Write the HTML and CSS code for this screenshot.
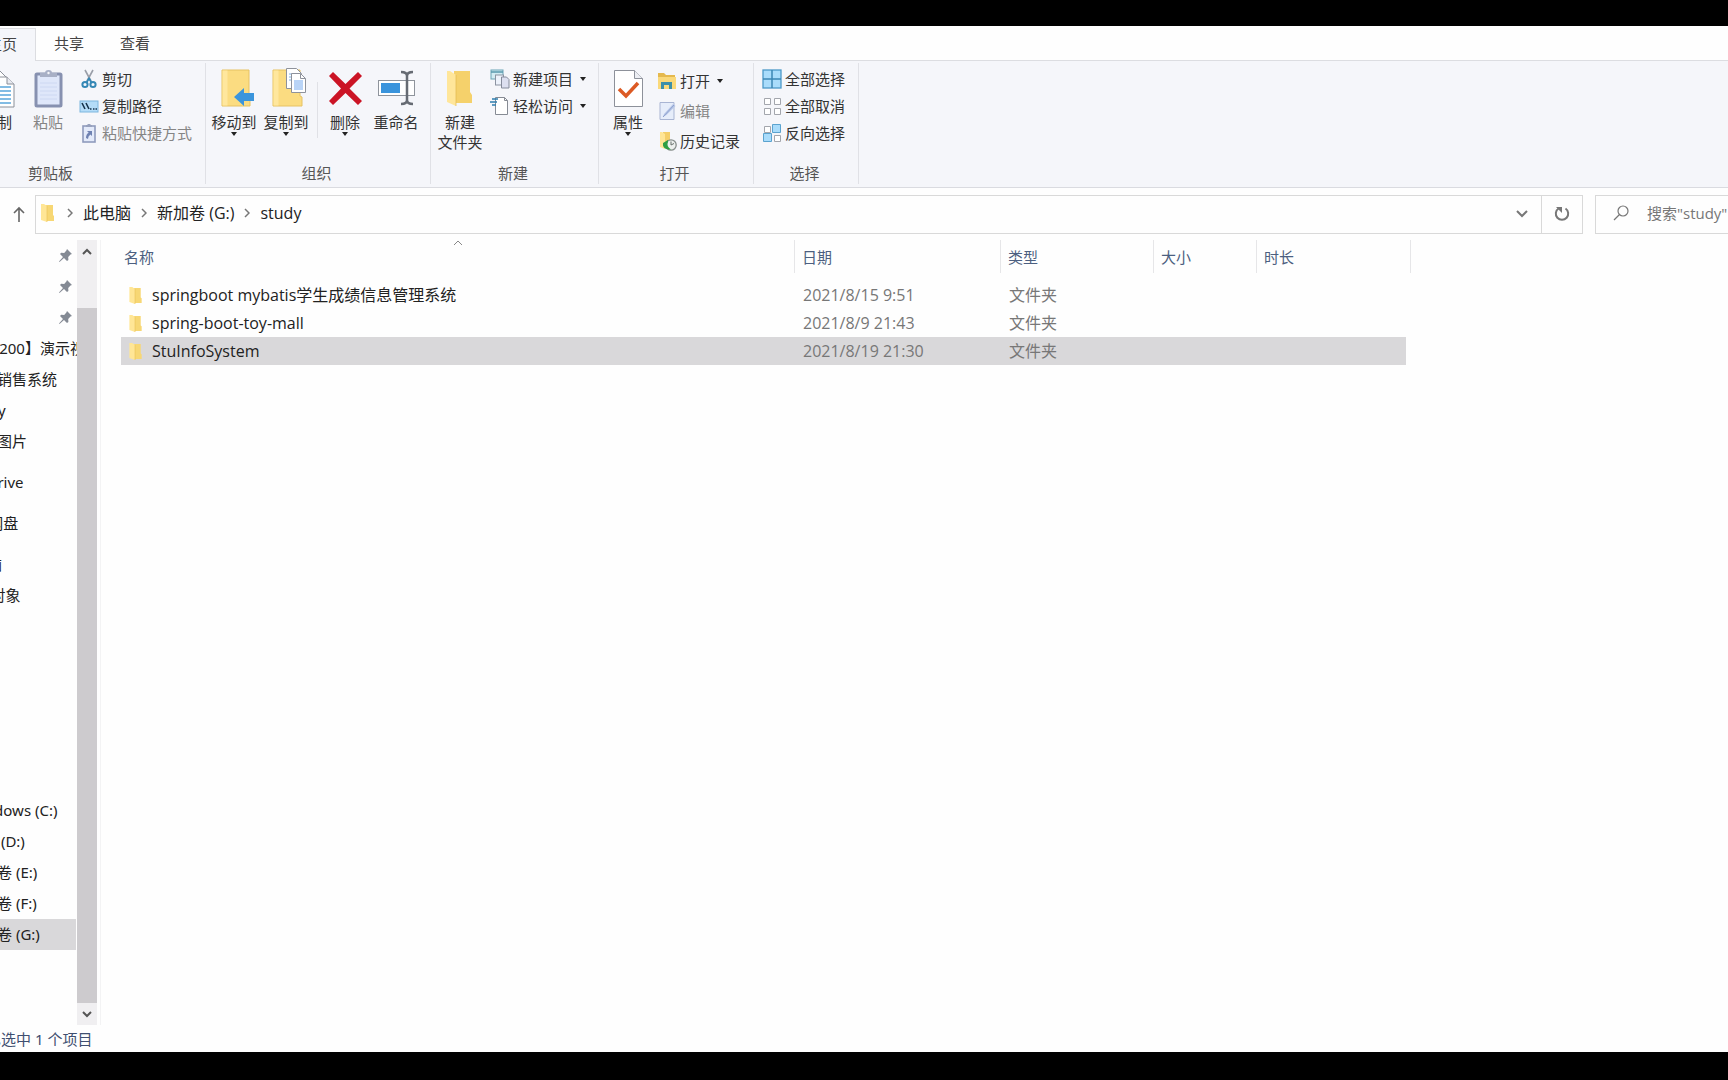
FILE: index.html
```html
<!DOCTYPE html>
<html lang="zh-CN">
<head>
<meta charset="utf-8">
<title>study</title>
<link rel="stylesheet" href="styles.css">
</head>
<body>
<svg class="defs" aria-hidden="true">
  <defs>
    <symbol id="folder" viewBox="0 0 14 18">
      <path d="M3 1h9v10l1 1v5H3z" fill="#f7d774"/>
      <path d="M0 0h3l3 2v16l-6-2z" fill="#ffe696"/>
      <path d="M6 2v16" stroke="#e9bf55" stroke-width=".6"/>
    </symbol>
    <symbol id="pin" viewBox="0 0 13 13">
      <path d="M8 0l5 5-1.5.6-2.3 2.3.2 3L8 12 5 9l-4.500 4L0 12.500 4 8 1 5l1.200-1.300 3 .2L7.400 1.600z" fill="#848a94"/>
    </symbol>
    <symbol id="chevron" viewBox="0 0 6 10">
      <path d="M1 1l4 4-4 4" fill="none" stroke="#777" stroke-width="1.500"/>
    </symbol>
    <symbol id="caret" viewBox="0 0 6 4"><path d="M0 0h6L3 4z" fill="#222"/></symbol>
  </defs>
</svg>
<main class="window">
  <nav class="tabs">
    <button class="tab tab-active">主页</button>
    <button class="tab">共享</button>
    <button class="tab">查看</button>
  </nav>

  <div class="ribbon">
    <section class="group group-clipboard">
      <div class="tools">
        <button class="big">
          <svg class="big-icon" viewBox="0 0 40 40">
            <path d="M10 2h12l7 7v20H10z" fill="#fff" stroke="#8b8f98"/>
            <path d="M17 9h13l7 7v23H17z" fill="#fff" stroke="#8b8f98"/>
            <path d="M30 9v7h7" fill="#e8eaf0" stroke="#8b8f98"/>
            <path d="M20 19h14M20 23h14M20 27h14M20 31h14M20 35h14" stroke="#5aa7dc" stroke-width="1.300"/>
          </svg>
          <span>复制</span>
        </button>
        <button class="big dim">
          <svg class="big-icon" viewBox="0 0 40 40">
            <rect x="8" y="6" width="25" height="32" rx="1" fill="#dfe7fa" stroke="#8791b0" stroke-width="3"/>
            <path d="M12 15h17M12 19h17M12 23h17M12 27h17M12 31h17" stroke="#cdd8f2"/>
            <path d="M12 9V5h5q0-3 3.500-3T24 5h5v4z" fill="#a8b0c6"/>
            <circle cx="20.500" cy="5" r="1.200" fill="#f5f6fa"/>
          </svg>
          <span>粘贴</span>
        </button>
        <div class="stack">
          <button class="small">
            <svg class="icon" viewBox="0 0 20 20">
              <path d="M6 1l6 11M14 1L8 12" stroke="#9a9ea8" stroke-width="1.600" fill="none"/>
              <circle cx="6" cy="15.500" r="2.600" fill="none" stroke="#3487b5" stroke-width="2"/>
              <circle cx="14" cy="15.500" r="2.600" fill="none" stroke="#3487b5" stroke-width="2"/>
              <path d="M7.500 13.500l2.500-4 2.500 4" fill="none" stroke="#3487b5" stroke-width="1.800"/>
            </svg>
            剪切
          </button>
          <button class="small">
            <svg class="icon" viewBox="0 0 20 20">
              <rect x="1" y="5" width="18" height="11" fill="#b4dcf8" stroke="#7db6de"/>
              <path d="M3 7l3 6M7 7l3 6" stroke="#16344d" stroke-width="1.600"/>
              <path d="M11 13h1.500M14 13h1.500M16.500 13h1.500" stroke="#16344d" stroke-width="1.500"/>
            </svg>
            复制路径
          </button>
          <button class="small dim">
            <svg class="icon" viewBox="0 0 20 20">
              <rect x="4" y="3" width="12" height="16" fill="#e3eafa" stroke="#8f9bbd" stroke-width="1.600"/>
              <path d="M7 4V2h1.500V1h3v1H13v2z" fill="#97a1bd"/>
              <path d="M8 8h5v5l-1.600-1.600Q9 13 9 16L7 15q0-4 2.700-5.300z" fill="#6f82b2"/>
            </svg>
            粘贴快捷方式
          </button>
        </div>
      </div>
      <h2 class="group-name">剪贴板</h2>
    </section>

    <section class="group group-organize">
      <div class="tools">
        <button class="big">
          <svg class="big-icon" viewBox="0 0 40 40">
            <path d="M8 2h27v26l1 1v9H8z" fill="#fbdc81" stroke="#e6c263"/>
            <path d="M8.500 2.500h5v35h-5z" fill="#ffe79d"/>
            <path d="M20 29l10-9v5h11v8H30v5z" fill="#3b95dc"/>
          </svg>
          <span>移动到</span>
          <svg class="caret"><use href="#caret"/></svg>
        </button>
        <button class="big">
          <svg class="big-icon" viewBox="0 0 40 40">
            <path d="M7 2h27v26l2 1v9H7z" fill="#fbdc81" stroke="#e6c263"/>
            <path d="M7.500 2.500h5v35h-5z" fill="#ffe79d"/>
            <path d="M20.500.5h10l5 5v15h-15z" fill="#fff" stroke="#8e929b"/>
            <path d="M23 6h8M23 9h8M23 12h8" stroke="#7fb0e2"/>
            <path d="M25.500 5.500h9l5 5v14h-14z" fill="#fff" stroke="#8e929b"/>
            <path d="M34.500 5.500v5h5" fill="none" stroke="#8e929b"/>
            <path d="M28 12h9v10h-9z" fill="#b9d4f7"/>
          </svg>
          <span>复制到</span>
          <svg class="caret"><use href="#caret"/></svg>
        </button>
        <span class="rule"></span>
        <button class="big big-narrow">
          <svg class="big-icon" viewBox="0 0 40 40">
            <path d="M8 4l12.500 12L33 4l4 4-12.500 12.500L37 33l-4 4-12.500-12L8 37l-4-4 12-12.500L4 8z" fill="#cb1425"/>
          </svg>
          <span>删除</span>
          <svg class="caret"><use href="#caret"/></svg>
        </button>
        <button class="big big-rename">
          <svg class="big-icon" viewBox="0 0 40 40">
            <rect x="2.500" y="12.500" width="36" height="15" fill="#fff" stroke="#8f949c"/>
            <rect x="5" y="15" width="19" height="10" fill="#3a94dc"/>
            <path d="M25 4q6 0 6 4 0-4 6-4M31 7v26M25 36q6 0 6-4 0 4 6 4" fill="none" stroke="#666b73" stroke-width="2.500"/>
          </svg>
          <span>重命名</span>
        </button>
      </div>
      <h2 class="group-name">组织</h2>
    </section>

    <section class="group group-new">
      <div class="tools">
        <button class="big">
          <svg class="big-icon" viewBox="0 0 40 40">
            <path d="M14 3h16v21l2 3v8H14z" fill="#f5d16b"/>
            <path d="M7 3h3l6 4v31l-9-4z" fill="#ffe69a"/>
            <path d="M16 7v31" stroke="#e2b84e" stroke-width=".7"/>
          </svg>
          <span>新建<br>文件夹</span>
        </button>
        <div class="stack">
          <button class="small">
            <svg class="icon" viewBox="0 0 20 20">
              <rect x="1" y="1" width="12" height="9" fill="#d3ecf3" stroke="#6aa3b5"/>
              <path d="M1 3h12" stroke="#5799ad" stroke-width="1.500"/>
              <rect x="5.500" y="6" width="8" height="10" fill="#edf2fb" stroke="#8c93a1"/>
              <path d="M11.500 8h5l2.500 2.500V19h-7.500z" fill="#dcdff0" stroke="#858b9b"/>
            </svg>
            新建项目<svg class="caret"><use href="#caret"/></svg>
          </button>
          <button class="small">
            <svg class="icon" viewBox="0 0 20 20">
              <path d="M5.500 1.500h9l3 3v14h-12z" fill="#fff" stroke="#868b94"/>
              <path d="M14.500 1.500v3h3" fill="none" stroke="#868b94"/>
              <path d="M2 3h6M0 6h7M2 9h4" stroke="#2f7fae" stroke-width="1.600"/>
            </svg>
            轻松访问<svg class="caret"><use href="#caret"/></svg>
          </button>
        </div>
      </div>
      <h2 class="group-name">新建</h2>
    </section>

    <section class="group group-open">
      <div class="tools">
        <button class="big">
          <svg class="big-icon" viewBox="0 0 40 40">
            <path d="M6.500 2.500h20l8 8v28h-28z" fill="#fff" stroke="#8d919a"/>
            <path d="M26.500 2.500v8h8" fill="#eceef3" stroke="#8d919a"/>
            <path d="M11 21l7 7 12-13" fill="none" stroke="#dc5a24" stroke-width="3.500"/>
          </svg>
          <span>属性</span>
          <svg class="caret"><use href="#caret"/></svg>
        </button>
        <div class="stack stack-open">
          <button class="small">
            <svg class="icon" viewBox="0 0 20 20">
              <path d="M1 2h6l2 2h9v14H1z" fill="#e5b94e"/>
              <path d="M1 6h18v12H1z" fill="#fad97a"/>
              <path d="M4 18v-7h11v7h-3v-4H7v4z" fill="#3c8fa9"/>
            </svg>
            打开<svg class="caret"><use href="#caret"/></svg>
          </button>
          <button class="small dim">
            <svg class="icon" viewBox="0 0 20 20">
              <path d="M3 1.500h14v17H3z" fill="#e6edfa" stroke="#a9b5d3"/>
              <path d="M6 16l1-3L16 3l2.500 2-9 9z" fill="#b9c8e8"/>
              <path d="M6 16L17 4" stroke="#8da0cd"/>
            </svg>
            编辑
          </button>
          <button class="small">
            <svg class="icon" viewBox="0 0 20 20">
              <path d="M6 1h7v15H6z" fill="#f4ce68"/>
              <path d="M3 1h2l3 2v15l-5-2z" fill="#ffe595"/>
              <circle cx="14" cy="14" r="5.200" fill="#edf0ee" stroke="#868d8a" stroke-width="1.300"/>
              <path d="M14 10.500V14l3-1.500" fill="none" stroke="#69716d"/>
              <path d="M6 12l5-3v2q-2 4 3 7.500-7 .5-8-4z" fill="#2f9e44"/>
            </svg>
            历史记录
          </button>
        </div>
      </div>
      <h2 class="group-name">打开</h2>
    </section>

    <section class="group group-select">
      <div class="tools">
        <div class="stack">
          <button class="small">
            <svg class="icon" viewBox="0 0 20 20">
              <rect x="1" y="1" width="18" height="18" fill="#a9dcfb" stroke="#4c99c8" stroke-width="1.300"/>
              <path d="M10 1v18M1 10h18" stroke="#3c87b5" stroke-width="1.500"/>
            </svg>
            全部选择
          </button>
          <button class="small">
            <svg class="icon" viewBox="0 0 20 20" fill="#fff" stroke="#a3a6ad">
              <path d="M2.500 2.500h6v6h-6zM12.500 2.500h6v6h-6zM2.500 12.500h6v6h-6zM12.500 12.500h6v6h-6z"/>
            </svg>
            全部取消
          </button>
          <button class="small">
            <svg class="icon" viewBox="0 0 20 20">
              <path d="M2.500 3.500h6v6h-6zM12.500 12.500h6v6h-6z" fill="#fff" stroke="#a3a6ad"/>
              <path d="M10.500 1.500h8v8h-8zM1.500 10.500h8v8h-8z" fill="#a9dcfb" stroke="#5ba3cf"/>
            </svg>
            反向选择
          </button>
        </div>
      </div>
      <h2 class="group-name">选择</h2>
    </section>
  </div>

  <div class="location">
    <button class="up" aria-label="向上">
      <svg width="12" height="16" viewBox="0 0 12 16"><path d="M6 16V2M1 7l5-5 5 5" fill="none" stroke="#666" stroke-width="1.600"/></svg>
    </button>
    <div class="address">
      <nav class="crumbs">
        <svg class="folder"><use href="#folder"/></svg>
        <svg class="chevron"><use href="#chevron"/></svg>
        <a class="crumb" href="#">此电脑</a>
        <svg class="chevron"><use href="#chevron"/></svg>
        <a class="crumb" href="#">新加卷 (G:)</a>
        <svg class="chevron"><use href="#chevron"/></svg>
        <a class="crumb" href="#">study</a>
      </nav>
      <button class="history" aria-label="历史">
        <svg width="12" height="8" viewBox="0 0 12 8"><path d="M1 1l5 5 5-5" fill="none" stroke="#777" stroke-width="2"/></svg>
      </button>
      <button class="refresh" aria-label="刷新">
        <svg width="16" height="16" viewBox="0 0 16 16"><path d="M11.500 2.500a6.200 6.200 0 1 1-7 0" fill="none" stroke="#777" stroke-width="2"/><path d="M2 1h6v6z" fill="#777"/></svg>
      </button>
    </div>
    <label class="search">
      <svg width="16" height="16" viewBox="0 0 16 16"><circle cx="10" cy="6" r="5" fill="none" stroke="#777" stroke-width="1.200"/><path d="M6.500 9.500L1 15" stroke="#777" stroke-width="1.300"/></svg>
      <input class="search-input" type="text" placeholder="搜索&quot;study&quot;" aria-label="搜索">
    </label>
  </div>

  <div class="body">
    <aside class="tree">
      <ul class="nodes">
        <li class="node node-pinned"><svg class="pin"><use href="#pin"/></svg></li>
        <li class="node node-pinned"><svg class="pin"><use href="#pin"/></svg></li>
        <li class="node node-pinned"><svg class="pin"><use href="#pin"/></svg></li>
        <li class="node">【10200】演示视频</li>
        <li class="node">手机销售系统</li>
        <li class="node">study</li>
        <li class="node">本机图片</li>
      </ul>
      <ul class="nodes"><li class="node node-root">OneDrive</li></ul>
      <ul class="nodes"><li class="node node-root">WPS网盘</li></ul>
      <ul class="nodes">
        <li class="node node-root">此电脑</li>
        <li class="node">3D 对象</li>
      </ul>
      <ul class="nodes nodes-drives">
        <li class="node">Windows (C:)</li>
        <li class="node">软件 (D:)</li>
        <li class="node">新加卷 (E:)</li>
        <li class="node">新加卷 (F:)</li>
        <li class="node node-selected">新加卷 (G:)</li>
      </ul>
    </aside>
    <div class="scrollbar">
      <button class="scroll-button" aria-label="向上滚动"><svg width="10" height="7" viewBox="0 0 10 7"><path d="M1 6l4-4 4 4" fill="none" stroke="#555" stroke-width="2"/></svg></button>
      <div class="thumb"></div>
      <button class="scroll-button" aria-label="向下滚动"><svg width="10" height="7" viewBox="0 0 10 7"><path d="M1 1l4 4 4-4" fill="none" stroke="#555" stroke-width="2"/></svg></button>
    </div>
    <div class="files">
      <table class="list">
        <thead>
          <tr>
            <th class="col-name">名称<svg class="sort" viewBox="0 0 10 6"><path d="M1 5l4-4 4 4" fill="none" stroke="#888"/></svg></th>
            <th class="col-date">日期</th>
            <th class="col-type">类型</th>
            <th class="col-size">大小</th>
            <th class="col-length">时长</th>
          </tr>
        </thead>
        <tbody>
          <tr><td><span class="name"><svg class="file-icon"><use href="#folder"/></svg>springboot mybatis学生成绩信息管理系统</span></td><td>2021/8/15 9:51</td><td>文件夹</td><td></td><td></td></tr>
          <tr><td><span class="name"><svg class="file-icon"><use href="#folder"/></svg>spring-boot-toy-mall</span></td><td>2021/8/9 21:43</td><td>文件夹</td><td></td><td></td></tr>
          <tr class="selected"><td><span class="name"><svg class="file-icon"><use href="#folder"/></svg>StuInfoSystem</span></td><td>2021/8/19 21:30</td><td>文件夹</td><td></td><td></td></tr>
        </tbody>
      </table>
    </div>
  </div>
  <footer class="status">已选中 1 个项目</footer>
</main>
</body>
</html>
```
FILE: styles.css
```css
* { box-sizing: border-box; }

body {
  margin: 0;
  min-height: 100vh;
  padding: 26px 0 28px;
  display: flex;
  flex-direction: column;
  overflow: hidden;
  background: #000;
  color: #222;
  font: 15px/20px "Open Sans", "Noto Sans CJK SC", sans-serif;
}

button {
  margin: 0;
  padding: 0;
  border: 0;
  background: none;
  color: inherit;
  font: inherit;
}

.defs { position: absolute; width: 0; height: 0; }

/* The window starts beyond the left side of the screen. */
.window {
  flex: 1;
  display: flex;
  flex-direction: column;
  margin-left: -104px;
  background: #fefefe;
}

.tabs {
  display: flex;
  height: 35px;
  padding: 2px 0 0 73px;
  border-bottom: 1px solid #dcdde1;
  color: #444;
}
.tab { padding: 0 18px 2px; }
.tab-active {
  margin-bottom: -1px;
  border: solid #dcdde1;
  border-width: 1px 1px 0 0;
  background: #f5f6fa;
}

.ribbon {
  display: flex;
  height: 127px;
  padding: 2px 0 3px;
  border-bottom: 1px solid #dadbe0;
  background: #f5f6fa;
  color: #333;
}
.group {
  display: flex;
  flex-direction: column;
  justify-content: space-between;
  border-right: 1px solid #e0e1e6;
}
.group-clipboard { width: 310px; }
.group-organize { width: 225px; }
.group-new { width: 168px; }
.group-open { width: 155px; }
.group-select { width: 105px; }
.group-name {
  margin: 0;
  padding: 0 3px 1px 0;
  color: #555;
  font-size: 15px;
  font-weight: 400;
  text-align: center;
}
.tools { display: flex; padding: 2px 0 0 2px; }
.group-clipboard .tools { padding-left: 77px; gap: 3px; }
.group-clipboard .group-name { padding-right: 0; }
.group-select .tools { padding-left: 8px; }

.big {
  display: flex;
  flex-direction: column;
  align-items: center;
  width: 52px;
  padding-top: 3px;
  white-space: nowrap;
}
.group-clipboard .big { width: 48px; }
.big-narrow { width: 44px; }
.big-rename { width: 58px; }
.big-icon { width: 40px; height: 40px; margin-bottom: 4px; }
.caret { width: 6px; height: 4px; }
.rule { width: 1px; height: 56px; margin: 17px 5px 0; background: #e0e1e6; }
.group-new .tools, .group-open .tools { padding-left: 3px; }

.stack { display: flex; flex-direction: column; align-items: flex-start; }
.group-clipboard .stack, .group-new .stack { padding-left: 4px; }
.stack-open { padding-left: 3px; }
.small { display: flex; align-items: center; gap: 3px; height: 27px; white-space: nowrap; }
.stack-open .small { height: 30px; }
.stack-open { padding-top: 1px; }
.small .caret { margin-left: 4px; }
.icon { width: 20px; height: 20px; }
.dim { color: #858585; }

.location {
  display: flex;
  align-items: center;
  height: 52px;
  padding-left: 116px;
}
.up { display: flex; width: 23px; padding-left: 1px; }
.address {
  flex: 1;
  display: flex;
  height: 39px;
  border: 1px solid #d9d9d9;
}
.crumbs {
  flex: 1;
  display: flex;
  align-items: center;
  gap: 10px;
  padding: 0 0 2px 5px;
  font-size: 16px;
}
.folder { width: 14px; height: 18px; margin-right: 2px; }
.chevron { width: 6px; height: 10px; }
.crumb { color: #222; text-decoration: none; }
.history { width: 38px; }
.refresh { width: 41px; border-left: 1px solid #d9d9d9; }
.history, .refresh { display: flex; align-items: center; justify-content: center; }
.search {
  display: flex;
  align-items: center;
  gap: 18px;
  width: 133px;
  height: 39px;
  margin-left: 12px;
  padding: 0 0 2px 17px;
  border: solid #d9d9d9;
  border-width: 1px 0 1px 1px;
}
.search-input {
  flex: 1;
  min-width: 0;
  padding: 0;
  border: 0;
  outline: 0;
  background: none;
  font: inherit;
}
.search-input::placeholder { color: #777; }

.body { flex: 1; display: flex; }
.tree {
  width: 181px;
  overflow: hidden;
  font-family: "Noto Sans", "Noto Sans CJK SC", sans-serif;
}
.nodes { margin: 0 0 10px; padding: 0; list-style: none; }
.nodes-drives { margin-top: 184px; margin-bottom: 0; }
.node {
  height: 31px;
  padding-left: 71px;
  line-height: 31px;
  white-space: nowrap;
}
.node-root { padding-left: 61px; }
.node-pinned { display: flex; align-items: center; justify-content: flex-end; padding-right: 5px; }
.node-selected { margin-right: 1px; background: #d9d8da; }
.pin { width: 13px; height: 13px; }

.scrollbar {
  display: flex;
  flex-direction: column;
  width: 20px;
  background: #f0eff1;
}
.scroll-button { display: flex; align-items: center; justify-content: center; height: 22px; }
.thumb { flex: 1; margin-top: 46px; background: #cdcbce; }

.files { flex: 1; margin-left: 3px; padding-left: 20px; border-left: 1px solid #f3f3f4; }
.list { border-collapse: separate; border-spacing: 0; table-layout: fixed; width: 1290px; text-align: left; }
.list th {
  position: relative;
  height: 33px;
  padding: 1px 0 0 7px;
  border-right: 1px solid #e6e6e8;
  color: #4c5f80;
  font-weight: 400;
}
.list thead::after { content: ""; display: block; height: 8px; }
.list .col-name { width: 674px; padding-left: 3px; }
.col-date { width: 206px; }
.col-type { width: 153px; }
.col-size { width: 103px; }
.col-length { width: 154px; }
.sort { position: absolute; top: 0; left: 50%; width: 10px; height: 6px; margin-left: -5px; }
.list td { height: 28px; padding: 0 0 0 8px; color: #777; font-size: 16px; }
.list td:last-child { border-right: 5px solid transparent; background-clip: padding-box; }
.selected td { background-color: #d9d8da; }
.name { display: flex; align-items: center; gap: 9px; color: #222; }
.file-icon { width: 14px; height: 17px; }

.status {
  height: 27px;
  padding: 4px 0 0 90px;
  color: #3f4f70;
  font-family: "Noto Sans", "Noto Sans CJK SC", sans-serif;
}
```
